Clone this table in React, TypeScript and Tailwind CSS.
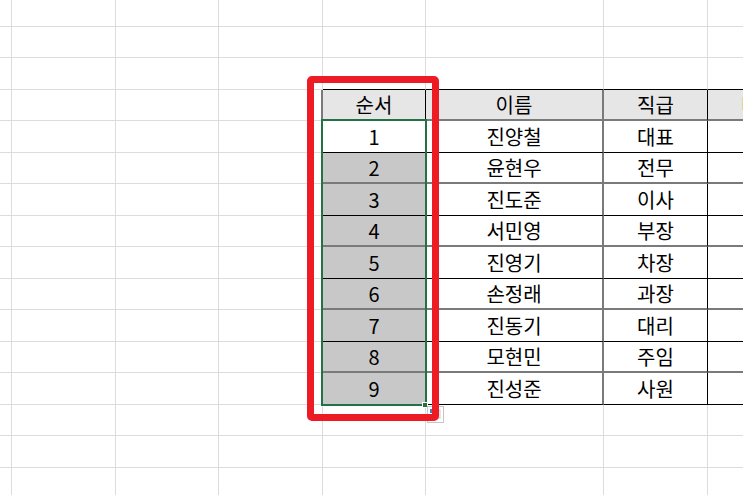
import React from "react";

const data: [string, string, string][] = [
  ["1", "진양철", "대표"],
  ["2", "윤현우", "전무"],
  ["3", "진도준", "이사"],
  ["4", "서민영", "부장"],
  ["5", "진영기", "차장"],
  ["6", "손정래", "과장"],
  ["7", "진동기", "대리"],
  ["8", "모현민", "주임"],
  ["9", "진성준", "사원"],
];

const ROWS = 16;
const COLS = 8;

function cellText(r: number, c: number): string {
  if (r === 3) {
    if (c === 4) return "순서";
    if (c === 5) return "이름";
    if (c === 6) return "직급";
    if (c === 7) return "비고";
    return "";
  }
  if (r >= 4 && r <= 12 && c >= 4 && c <= 6) {
    return data[r - 4][c - 4];
  }
  return "";
}

function cellClass(r: number, c: number): string {
  const inTable = r >= 3 && r <= 12 && c >= 4 && c <= 7;
  let right = "border-r border-r-[#dcdcdc]";
  let bottom = "border-b border-b-[#dcdcdc]";
  let bg = "bg-white";
  if (inTable) {
    right = c === 5 ? "border-r-2 border-r-[#7a7a7a]" : "border-r border-r-black";
    bottom =
      r % 2 === 1 ? "border-b-2 border-b-[#7a7a7a]" : "border-b border-b-black";
    if (r === 3) bg = "bg-[#e7e6e6]";
    else if (c === 4 && r >= 5) bg = "bg-[#c8c8c8]";
  } else {
    if (c === 3 && r >= 3 && r <= 12) right = "border-r-2 border-r-[#7a7a7a]";
    if (r === 2 && c >= 4) bottom = "border-b border-b-black";
  }
  return `${right} ${bottom} ${bg} flex items-center justify-center overflow-hidden whitespace-nowrap`;
}

export default function App() {
  const cells: React.ReactNode[] = [];
  for (let r = 0; r < ROWS; r++) {
    for (let c = 0; c < COLS; c++) {
      cells.push(
        <div key={`${r}-${c}`} className={cellClass(r, c)}>
          {cellText(r, c)}
        </div>
      );
    }
  }
  return (
    <div
      className="relative w-[743px] h-[495px] overflow-hidden bg-white text-black text-[20px] leading-none"
      style={{ fontFamily: '"Noto Sans CJK KR", "Noto Sans", sans-serif' }}
    >
      <div className="grid grid-cols-[12px_104px_103px_104px_103px_178px_104px_104px] grid-rows-[27px_31px_32px_31px_32px_31px_32px_31px_32px_31px_32px_31px_32px_31px_32px_31px] w-[812px]">
        {cells}
      </div>

      {/* selection outline */}
      <div className="absolute left-[321px] top-[119px] w-[106px] h-[287px] border-2 border-[#217346]" />
      {/* fill handle */}
      <div className="absolute left-[422px] top-[402px] w-[6px] h-[6px] bg-[#217346] border border-white" />
      {/* paste options */}
      <div className="absolute left-[427px] top-[406px] w-[17px] h-[17px] border border-[#c6c6c6] bg-white">
        <svg width="15" height="15" viewBox="0 0 15 15">
          <rect x="2" y="2" width="5" height="4" fill="#4a78c8" />
          <rect x="8" y="3" width="4" height="8" fill="none" stroke="#c8c8c8" strokeWidth="1" />
        </svg>
      </div>
      {/* red highlight frame */}
      <div className="absolute left-[307px] top-[76px] w-[132px] h-[345px] border-[7px] border-[#ed1c24] rounded-[5px]" />
    </div>
  );
}
